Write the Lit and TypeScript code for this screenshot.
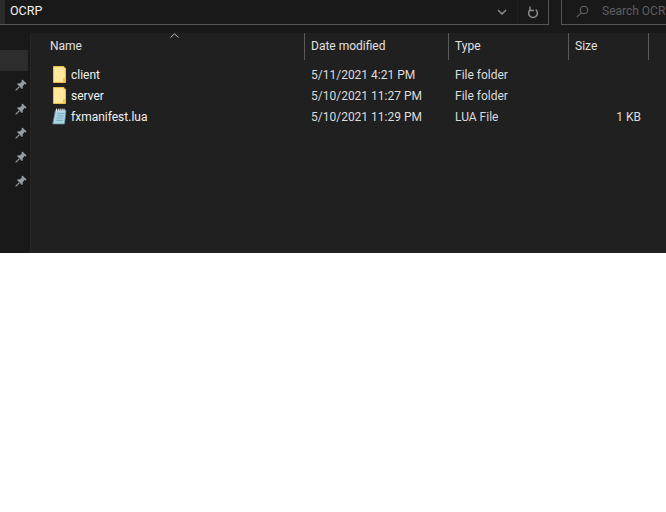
import { LitElement, html, css } from "lit";
import { customElement } from "lit/decorators.js";

const pin = html`<svg class="pin" width="12" height="12" viewBox="0 0 12 12"><path d="M7.4 .4 11.6 4.6 10.6 5.5 9.5 5.1 7.6 7.4 7.8 9.2 6.9 10 2 5.1 2.8 4.2 4.6 4.4 6.9 2.5 6.5 1.4Z" fill="#939ca3"/><path d="M4.2 7.8 .6 11.4" stroke="#939ca3" stroke-width="1.2"/></svg>`;
const folder = html`<svg class="ico fold" width="13" height="17" viewBox="0 0 13 17"><path d="M.5 .5H11V2H12.5V16.5H.5Z" fill="#ffe28c" stroke="#e8bd45"/><path d="M1.5 1.5H10V15.5H1.5Z" fill="#ffe69c"/><path d="M10 12V15.8H12.2V12Z" fill="#f3c44f"/></svg>`;
const note = html`<svg class="ico" width="15" height="17" viewBox="0 0 16 17" preserveAspectRatio="none"><path d="M3.6 2.2H15L13.4 16H.8Z" fill="#a9d6e6" stroke="#5f7f90" stroke-width=".8"/><path d="M5.8 5.5H13M5.4 7.8H12.6M5 10.1H12.2M4.6 12.4H11.8" stroke="#6f9fb5" stroke-width=".8"/><path d="M4.8 .6V3.4M6.8 .6V3.4M8.8 .6V3.4M10.8 .6V3.4M12.8 .6V3.4" stroke="#eef4f6" stroke-width="1"/></svg>`;

@customElement("app-root")
export class AppRoot extends LitElement {
  static styles = css`
    :host { display: block; width: 666px; height: 512px; background: #fff; font-family: Roboto, sans-serif; font-size: 12px; color: #e6e6e6; }
    .win { height: 253px; background: #191919; display: flex; flex-direction: column; overflow: hidden; }
    .top { height: 33px; display: flex; flex: none; }
    .lead { width: 5px; height: 25px; box-sizing: border-box; background: #2b2b2b; border-bottom: 1px solid #555; flex: none; }
    .addr { width: 544px; height: 25px; box-sizing: border-box; border-right: 1px solid #555; border-bottom: 1px solid #555; display: flex; align-items: center; flex: none; }
    .crumb { flex: 1; padding-left: 5px; color: #f2f2f2; font-size: 12.5px; line-height: 20px; margin-top: -3px; }
    .ctl { width: 30px; height: 24px; display: flex; align-items: center; justify-content: center; }
    .ctl + .ctl { border-left: 1px solid #222; }
    .search { margin-left: 12px; flex: 1; height: 25px; box-sizing: border-box; border-left: 1px solid #555; border-bottom: 1px solid #555; display: flex; align-items: center; gap: 13px; padding-left: 14px; color: #5e5e5e; white-space: nowrap; overflow: hidden; line-height: 20px; }
    .search svg { flex: none; margin-top: -2px; }
    .search span { margin-top: -2px; }
    .body { flex: 1; display: flex; min-height: 0; }
    .side { width: 30px; flex: none; border-right: 1px solid #262626; padding-top: 17px; }
    .sel { width: 28px; height: 21px; background: #2d2d2d; }
    .pins { display: flex; flex-direction: column; align-items: flex-end; gap: 12px; padding: 8px 3px 0 0; }
    .pin { display: block; }
    .main { flex: 1; background: #202020; padding-left: 1px; position: relative; }
    .head, .row { display: grid; grid-template-columns: 273px 144px 120px 80px 1fr; }
    .head { height: 26px; }
    .hc { border-right: 1px solid #5a5a5a; padding-left: 6px; line-height: 27px; color: #e0e0e0; }
    .hc:first-child { padding-left: 18px; }
    .hc:last-child { border: none; }
    .sort { position: absolute; left: 139px; top: 0; }
    .rows { padding-top: 6px; }
    .row { height: 21px; line-height: 21px; }
    .name { display: flex; align-items: center; gap: 4px; padding-left: 20px; color: #f0f0f0; }
    .ico { flex: none; display: block; margin-top: -2px; }
    .fold { margin-left: 1px; margin-right: 1px; }
    .c { padding-left: 6px; color: #dcdcdc; }
    .r { text-align: right; padding-right: 8px; padding-left: 0; }
  `;
  private row(icon: unknown, n: string, d: string, t: string, s = "") {
    return html`<div class="row"><div class="name">${icon}<span>${n}</span></div><div class="c">${d}</div><div class="c">${t}</div><div class="c r">${s}</div><div></div></div>`;
  }
  render() {
    return html`<div class="win">
      <div class="top">
        <div class="lead"></div>
        <div class="addr">
          <div class="crumb">OCRP</div>
          <div class="ctl"><svg width="10" height="6" viewBox="0 0 10 6"><path d="M1 1 5 5 9 1" fill="none" stroke="#8a8a8a" stroke-width="1.6"/></svg></div>
          <div class="ctl"><svg width="12" height="13" viewBox="0 0 12 13"><path d="M8.6 3.6A4.4 4.4 0 1 1 3.4 3.6" fill="none" stroke="#8a8a8a" stroke-width="1.5"/><path d="M3 .5V4.5H7" fill="none" stroke="#8a8a8a" stroke-width="1.4"/></svg></div>
        </div>
        <div class="search">
          <svg width="13" height="13" viewBox="0 0 13 13"><circle cx="8" cy="5" r="3.8" fill="none" stroke="#6a6a6a" stroke-width="1"/><path d="M5.2 7.8 .8 12.2" stroke="#5a6a5a" stroke-width="1.2"/></svg>
          <span>Search OCRP</span>
        </div>
      </div>
      <div class="body">
        <div class="side">
          <div class="sel"></div>
          <div class="pins">${pin}${pin}${pin}${pin}${pin}</div>
        </div>
        <div class="main">
          <svg class="sort" width="9" height="5" viewBox="0 0 9 5"><path d="M.5 4.5 4.5 .8 8.5 4.5" fill="none" stroke="#bdbdbd"/></svg>
          <div class="head">
            <div class="hc">Name</div><div class="hc">Date modified</div><div class="hc">Type</div><div class="hc">Size</div><div class="hc"></div>
          </div>
          <div class="rows">
            ${this.row(folder, "client", "5/11/2021 4:21 PM", "File folder")}
            ${this.row(folder, "server", "5/10/2021 11:27 PM", "File folder")}
            ${this.row(note, "fxmanifest.lua", "5/10/2021 11:29 PM", "LUA File", "1 KB")}
          </div>
        </div>
      </div>
    </div>`;
  }
}
